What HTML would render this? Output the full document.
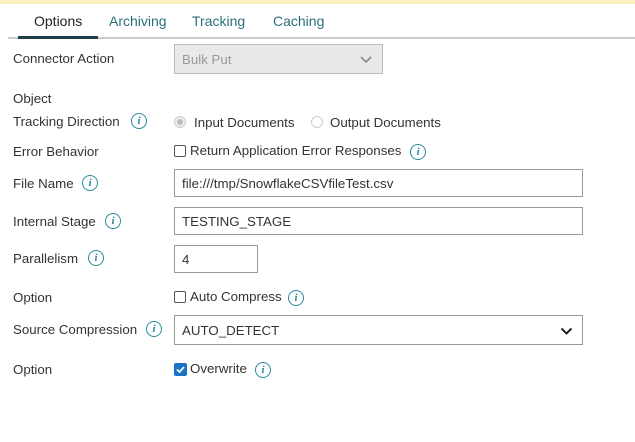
<!DOCTYPE html>
<html><head><style>
body{margin:0;width:635px;height:442px;background:#fff;font-family:"Liberation Sans",sans-serif;font-size:13.3px;color:#333;position:relative;overflow:hidden}
.a{position:absolute;white-space:nowrap}
.i{position:absolute;width:14px;height:14px;border:1.5px solid #2a8a9a;border-radius:50%;color:#2a8a9a;font:italic bold 11px "Liberation Serif",serif;text-align:center;line-height:14px;box-sizing:content-box}
.box{position:absolute;border:1px solid #999;background:#fff;box-sizing:border-box;padding-left:7px;font-size:13.3px;color:#333;display:flex;align-items:center}
.cb{position:absolute;width:12px;height:12px;border:1px solid #555;border-radius:2px;box-sizing:border-box;background:#fff}
.tab{position:absolute;top:13px;font-size:14px;color:#2a6f78}
</style></head><body>
<div class="a" style="left:0;top:0;width:635px;height:4px;background:#fbefc0"></div>
<div class="tab" style="left:34px;color:#222">Options</div>
<div class="tab" style="left:109px">Archiving</div>
<div class="tab" style="left:192px">Tracking</div>
<div class="tab" style="left:273px">Caching</div>
<div class="a" style="left:8px;top:37px;width:627px;height:2px;background:#ccc"></div>
<div class="a" style="left:18px;top:36px;width:80px;height:3px;background:#1f3f4a"></div>

<div class="a" style="left:13px;top:51px">Connector Action</div>
<div class="box" style="left:174px;top:44px;width:209px;height:30px;background:#e9e9e9;border-color:#bbb;color:#999">Bulk Put
<svg style="position:absolute;right:10px;top:11px" width="12" height="8"><path d="M1 1l5 5 5-5" stroke="#888" stroke-width="1.6" fill="none"/></svg></div>

<div class="a" style="left:13px;top:91px">Object</div>
<div class="a" style="left:13px;top:114px">Tracking Direction</div>
<div class="i" style="left:131px;top:113px">i</div>
<div class="a" style="left:174px;top:116px;width:12px;height:12px;border:1px solid #ccc;border-radius:50%;background:#eee;box-sizing:border-box"><div style="margin:2px;width:6px;height:6px;border-radius:50%;background:#bbb"></div></div>
<div class="a" style="left:194px;top:115px">Input Documents</div>
<div class="a" style="left:311px;top:116px;width:12px;height:12px;border:1px solid #ccc;border-radius:50%;box-sizing:border-box"></div>
<div class="a" style="left:330px;top:115px">Output Documents</div>

<div class="a" style="left:13px;top:144px">Error Behavior</div>
<div class="cb" style="left:174px;top:145px"></div>
<div class="a" style="left:190px;top:143px">Return Application Error Responses</div>
<div class="i" style="left:410px;top:144px">i</div>

<div class="a" style="left:13px;top:176px">File Name</div>
<div class="i" style="left:82px;top:175px">i</div>
<div class="box" style="left:174px;top:169px;width:409px;height:28px">file:///tmp/SnowflakeCSVfileTest.csv</div>

<div class="a" style="left:13px;top:214px">Internal Stage</div>
<div class="i" style="left:105px;top:213px">i</div>
<div class="box" style="left:174px;top:207px;width:409px;height:28px">TESTING_STAGE</div>

<div class="a" style="left:13px;top:251px">Parallelism</div>
<div class="i" style="left:88px;top:250px">i</div>
<div class="box" style="left:174px;top:245px;width:84px;height:28px">4</div>

<div class="a" style="left:13px;top:290px">Option</div>
<div class="cb" style="left:174px;top:291px"></div>
<div class="a" style="left:190px;top:289px">Auto Compress</div>
<div class="i" style="left:288px;top:290px">i</div>

<div class="a" style="left:13px;top:322px">Source Compression</div>
<div class="i" style="left:146px;top:321px">i</div>
<div class="box" style="left:174px;top:315px;width:409px;height:30px">AUTO_DETECT
<svg style="position:absolute;right:9px;top:11px" width="13" height="9"><path d="M1.5 1.5l5 5 5-5" stroke="#222" stroke-width="2" fill="none"/></svg></div>

<div class="a" style="left:13px;top:362px">Option</div>
<div class="a" style="left:174px;top:363px;width:13px;height:13px;background:#1a73c8;border-radius:2px"><svg width="13" height="13"><path d="M3 6.5l2.5 2.5 4.5-5" stroke="#fff" stroke-width="1.8" fill="none"/></svg></div>
<div class="a" style="left:190px;top:361px">Overwrite</div>
<div class="i" style="left:255px;top:362px">i</div>
</body></html>
